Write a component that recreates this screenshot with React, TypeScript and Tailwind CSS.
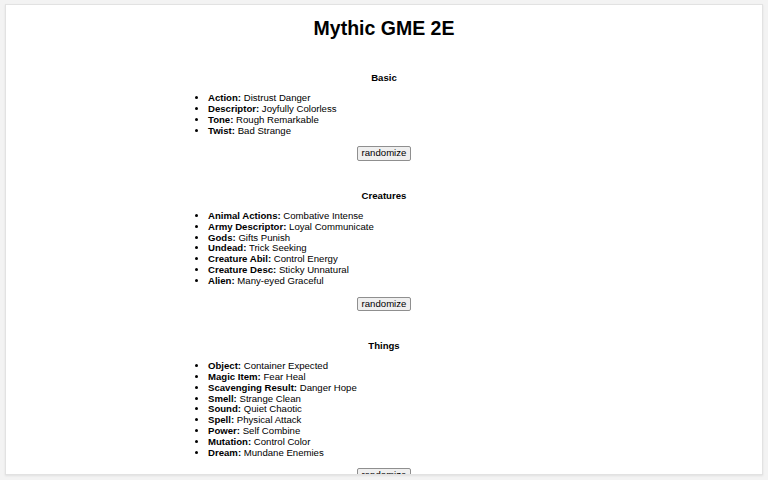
import { useState } from "react";

type Entry = { label: string; value: string };

type Table = {
  title: string;
  entries: Entry[];
};

const tables: Table[] = [
  {
    title: "Basic",
    entries: [
      { label: "Action", value: "Distrust Danger" },
      { label: "Descriptor", value: "Joyfully Colorless" },
      { label: "Tone", value: "Rough Remarkable" },
      { label: "Twist", value: "Bad Strange" },
    ],
  },
  {
    title: "Creatures",
    entries: [
      { label: "Animal Actions", value: "Combative Intense" },
      { label: "Army Descriptor", value: "Loyal Communicate" },
      { label: "Gods", value: "Gifts Punish" },
      { label: "Undead", value: "Trick Seeking" },
      { label: "Creature Abil", value: "Control Energy" },
      { label: "Creature Desc", value: "Sticky Unnatural" },
      { label: "Alien", value: "Many-eyed Graceful" },
    ],
  },
  {
    title: "Things",
    entries: [
      { label: "Object", value: "Container Expected" },
      { label: "Magic Item", value: "Fear Heal" },
      { label: "Scavenging Result", value: "Danger Hope" },
      { label: "Smell", value: "Strange Clean" },
      { label: "Sound", value: "Quiet Chaotic" },
      { label: "Spell", value: "Physical Attack" },
      { label: "Power", value: "Self Combine" },
      { label: "Mutation", value: "Control Color" },
      { label: "Dream", value: "Mundane Enemies" },
    ],
  },
];

function TableSection({ table }: { table: Table }) {
  const [entries, setEntries] = useState(table.entries);

  // shuffle the values around so the button does something
  const randomize = () => {
    const values = entries.map((e) => e.value).sort(() => Math.random() - 0.5);
    setEntries(entries.map((e, i) => ({ ...e, value: values[i] })));
  };

  return (
    <section className="mt-[34px] [&+section]:mt-[30px]">
      <h3 className="text-center font-bold">{table.title}</h3>
      <ul className="mx-auto mt-[9px] max-w-[384px] list-disc pl-[16px]">
        {entries.map((entry) => (
          <li key={entry.label}>
            <b>{entry.label}:</b> {entry.value}
          </li>
        ))}
      </ul>
      <div className="mt-[10px] text-center">
        <button
          onClick={randomize}
          className="rounded-[2px] border border-[#8f8f8f] bg-[#efefef] px-[4px] py-px leading-[10.8px] text-black"
        >
          randomize
        </button>
      </div>
    </section>
  );
}

export default function App() {
  return (
    <div className="h-[480px] bg-[#f3f3f3] px-[5px] pt-[4px] font-['Liberation_Sans',Arial,sans-serif] text-[9.6px] leading-[10.8px] text-black">
      <div className="h-[471px] overflow-hidden border border-[#e2e2e2] bg-white shadow-[0_1px_2px_rgba(0,0,0,0.08)]">
        <h1 className="pt-[12px] text-center text-[19.5px] font-bold leading-[22.4px]">Mythic GME 2E</h1>
        {tables.map((t) => (
          <TableSection key={t.title} table={t} />
        ))}
      </div>
    </div>
  );
}
